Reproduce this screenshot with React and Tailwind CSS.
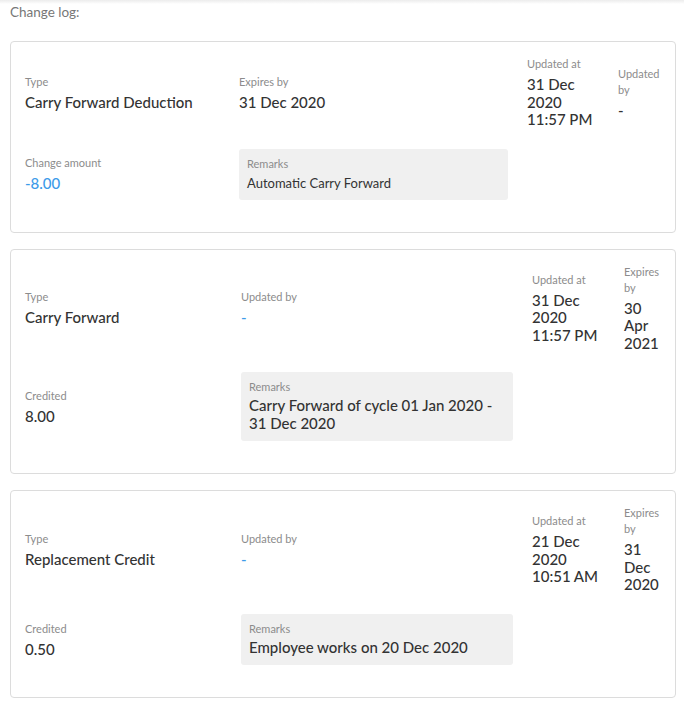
import React from 'react'

const font = { fontFamily: 'Lato, "Noto Sans", sans-serif' }

function Field({ label, children, valueClass = 'text-[#333]' }) {
  return (
    <div>
      <div className="text-[11px] leading-[16px] text-[#8c8c8c]">{label}</div>
      <div className={`text-[15px] leading-[17.5px] mt-[4px] font-medium ${valueClass}`}>{children}</div>
    </div>
  )
}

function Remarks({ children, big }) {
  return (
    <div className={`bg-[#f0f0f0] rounded-[3px] px-[8px] pt-[7px] mr-[19px] ${big ? 'pb-[9px]' : 'pb-[8px]'}`}>
      <div className="text-[11px] leading-[16px] text-[#8c8c8c]">Remarks</div>
      <div className={big ? 'text-[15px] leading-[17.5px] mt-[2px] font-medium text-[#333]' : 'text-[13px] leading-[18px] mt-[2px] text-[#333]'}>
        {children}
      </div>
    </div>
  )
}

function Card({ cols, children }) {
  return (
    <div className="border border-[#dcdcdc] rounded-[4px] px-[14px] pt-[14px] pb-[32px]">
      <div className={`grid ${cols} items-center gap-y-[20px]`}>{children}</div>
    </div>
  )
}

export default function App() {
  return (
    <div className="w-[684px] h-[703px] bg-white relative overflow-hidden" style={font}>
      <div className="absolute top-0 left-0 right-0 h-[4px] bg-gradient-to-b from-[#ececec] to-white" />
      <div className="pl-[10px] pr-[8px] pt-[4px]">
        <div className="text-[13.5px] leading-[16px] text-[#777] mb-[21px]">Change log:</div>

        <div className="flex flex-col gap-[16px]">
          <Card cols="grid-cols-[214px_288px_91px_1fr]">
            <Field label="Type">Carry Forward Deduction</Field>
            <Field label="Expires by">31 Dec 2020</Field>
            <Field label="Updated at">31 Dec<br />2020<br />11:57 PM</Field>
            <Field label={<>Updated<br />by</>}>-</Field>
            <Field label="Change amount" valueClass="text-[#3d9be9]">-8.00</Field>
            <Remarks>Automatic Carry Forward</Remarks>
          </Card>

          <Card cols="grid-cols-[216px_291px_92px_1fr]">
            <Field label="Type">Carry Forward</Field>
            <Field label="Updated by" valueClass="text-[#3d9be9]">-</Field>
            <Field label="Updated at">31 Dec<br />2020<br />11:57 PM</Field>
            <Field label={<>Expires<br />by</>}>30<br />Apr<br />2021</Field>
            <Field label="Credited">8.00</Field>
            <Remarks big>Carry Forward of cycle 01 Jan 2020 -<br />31 Dec 2020</Remarks>
          </Card>

          <Card cols="grid-cols-[216px_291px_92px_1fr]">
            <Field label="Type">Replacement Credit</Field>
            <Field label="Updated by" valueClass="text-[#3d9be9]">-</Field>
            <Field label="Updated at">21 Dec<br />2020<br />10:51 AM</Field>
            <Field label={<>Expires<br />by</>}>31<br />Dec<br />2020</Field>
            <Field label="Credited">0.50</Field>
            <Remarks big>Employee works on 20 Dec 2020</Remarks>
          </Card>
        </div>
      </div>
    </div>
  )
}
